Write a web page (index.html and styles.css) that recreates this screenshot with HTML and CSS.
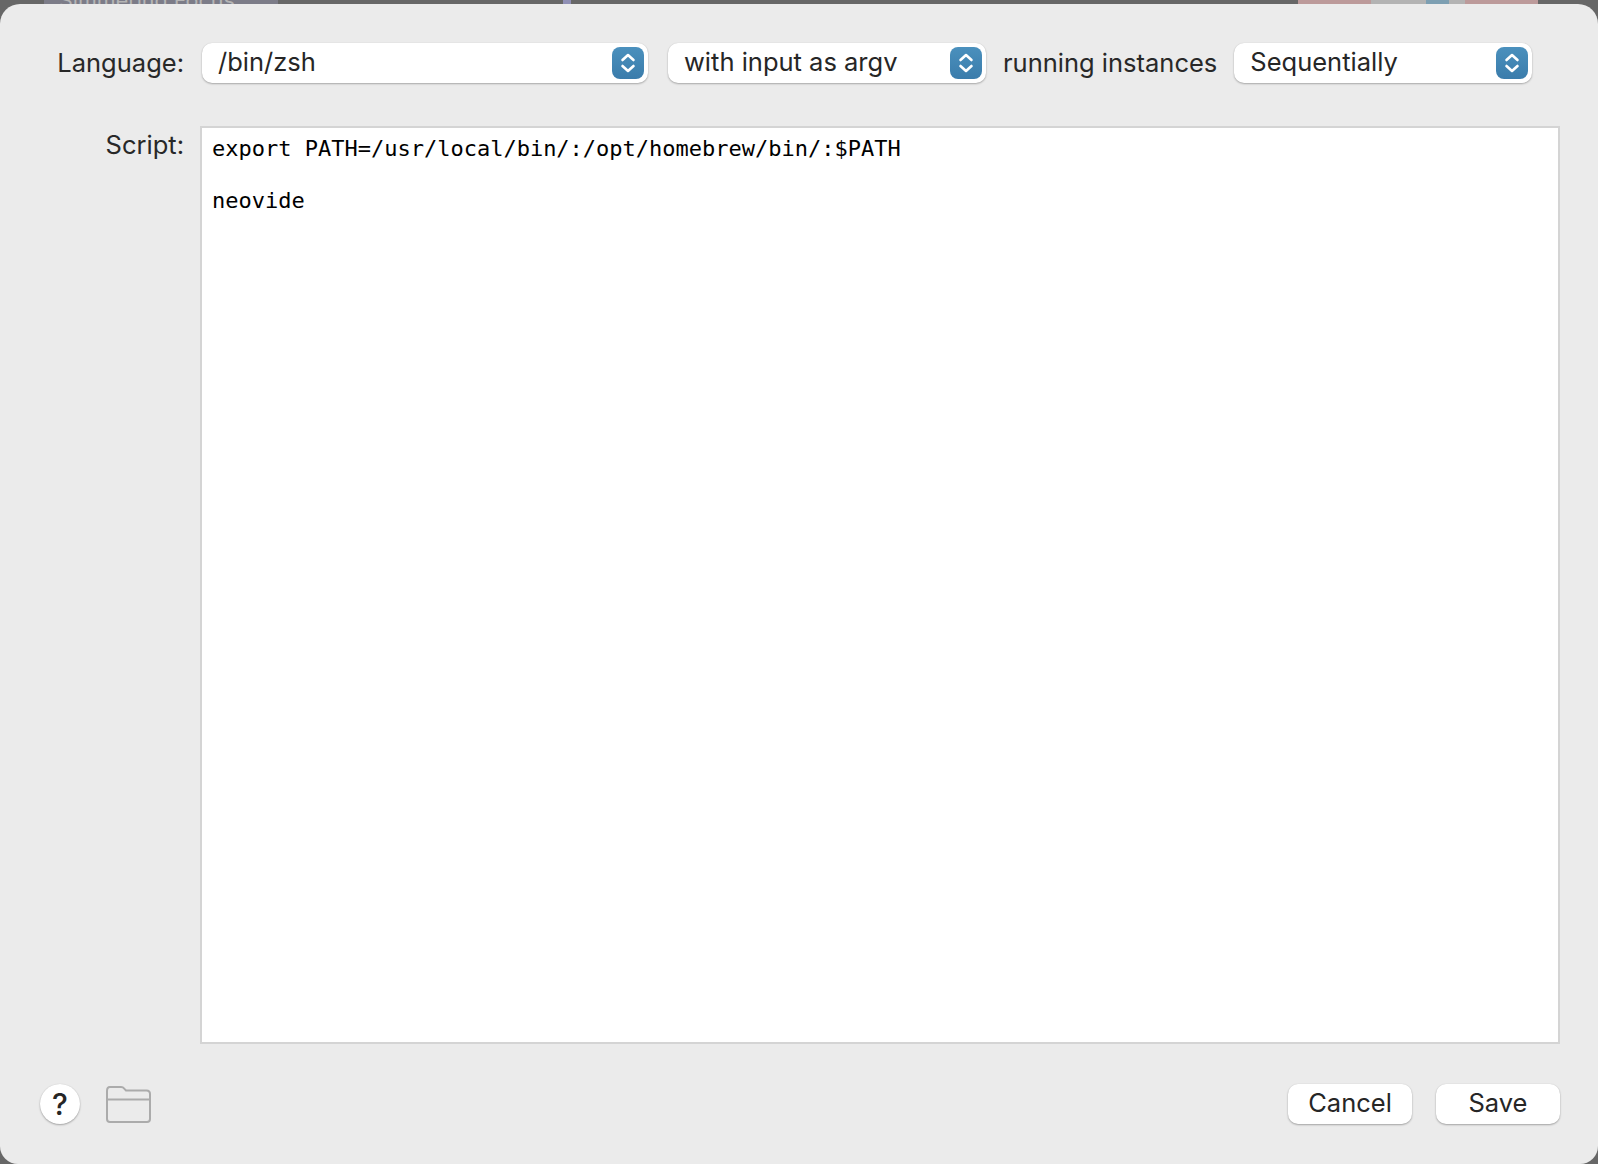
FILE: index.html
```html
<!DOCTYPE html>
<html lang="en">
<head>
<meta charset="utf-8">
<title>Script editor</title>
<link rel="stylesheet" href="styles.css">
</head>
<body>
<div class="backdrop">
  <span class="bd bd-a"><span class="bd-text">Simmering Focus</span></span>
  <span class="bd bd-b"></span>
  <span class="bd bd-c"></span>
  <span class="bd bd-c2"></span>
  <span class="bd bd-d"></span>
  <span class="bd bd-e"></span>
  <span class="bd bd-f"></span>
</div>
<main class="dialog">
  <div class="top-row">
    <span class="label label-lang">Language:</span>
    <div class="select select-lang"><span class="select-text">/bin/zsh</span>
      <span class="stepper"><svg viewBox="0 0 16 22" width="16" height="22"><path d="M2.500 8 8 3 13.500 8M2.500 14 8 19 13.500 14"/></svg></span></div>
    <div class="select select-input"><span class="select-text">with input as argv</span>
      <span class="stepper"><svg viewBox="0 0 16 22" width="16" height="22"><path d="M2.500 8 8 3 13.500 8M2.500 14 8 19 13.500 14"/></svg></span></div>
    <span class="inline-text">running instances</span>
    <div class="select select-run"><span class="select-text">Sequentially</span>
      <span class="stepper"><svg viewBox="0 0 16 22" width="16" height="22"><path d="M2.500 8 8 3 13.500 8M2.500 14 8 19 13.500 14"/></svg></span></div>
  </div>
  <div class="script-row">
    <span class="label label-script">Script:</span>
    <div class="editor">
      <div class="code">export PATH=/usr/local/bin/:/opt/homebrew/bin/:$PATH</div>
      <div class="code">&nbsp;</div>
      <div class="code">neovide</div>
    </div>
  </div>
  <div class="bottom-row">
    <div class="help">?</div>
    <svg class="folder" viewBox="0 0 45 37" width="45" height="37"><path d="M1 5Q1 1 4 1H15Q17 1 18.500 2.800L20 4.500H40.500Q44 4.500 44 8V33Q44 36 41 36H4Q1 36 1 33ZM1 13.500H44"/></svg>
    <div class="actions">
      <div class="btn">Cancel</div>
      <div class="btn">Save</div>
    </div>
  </div>
</main>
</body>
</html>
```
FILE: styles.css
```css
* { box-sizing: border-box; }
html, body { margin: 0; padding: 0; }
body {
  width: 1598px;
  height: 1164px;
  overflow: hidden;
  background: #676767;
  font-family: Inter, "Liberation Sans", sans-serif;
  color: #262626;
  position: relative;
}
.backdrop { position: absolute; left: 0; top: 0; width: 1598px; height: 20px; overflow: hidden; }
.bd { position: absolute; top: 0; height: 20px; }
.bd-a { left: 44px; width: 234px; background: #7c7c88; }
.bd-text { position: absolute; left: 15px; top: -10px; font-size: 21.5px; line-height: 20px; color: #b5b5b5; white-space: nowrap; }
.bd-b { left: 563px; width: 8px; background: #8f8fb5; }
.bd-c { left: 1298px; width: 73px; background: #bc9a9a; }
.bd-c2 { left: 1371px; width: 55px; background: #b3b3b3; }
.bd-d { left: 1426px; width: 23px; background: #7d9fb2; }
.bd-e { left: 1449px; width: 16px; background: #b3b3b3; }
.bd-f { left: 1465px; width: 73px; background: #bc9a9a; }

.dialog {
  position: relative;
  margin-top: 4px;
  height: 1160px;
  background: #ebebeb;
  border-radius: 20px 20px 18px 18px;
  padding: 39px 38px 0 0;
  display: flex;
  flex-direction: column;
}
.top-row { display: flex; align-items: center; height: 40px; }
.label {
  width: 184px;
  text-align: right;
  font-size: 25.5px;
  color: #282828;
  flex: none;
}
.label-lang { padding-bottom: 2px; }
.select {
  flex: none;
  height: 40px;
  margin-left: 18px;
  background: #fff;
  border-radius: 10px;
  box-shadow: 0 1px 2px rgba(0,0,0,.28), 0 0 1px rgba(0,0,0,.12);
  display: flex;
  align-items: center;
  justify-content: space-between;
  padding: 0 4px 0 16px;
  font-size: 25.5px;
  color: #262626;
}
.select-text { line-height: 38px; height: 40px; }
.select-lang { width: 446px; }
.select-input { width: 318px; margin-left: 20px; }
.select-run { width: 298px; margin-left: 17px; }
.inline-text { margin-left: 17px; padding-bottom: 2px; font-size: 25.5px; color: #282828; white-space: nowrap; }
.stepper {
  width: 32px;
  height: 32px;
  border-radius: 8px;
  background: linear-gradient(#4a90bd, #3a7cab);
  display: flex;
  align-items: center;
  justify-content: center;
}
.stepper svg { fill: none; stroke: #fff; stroke-width: 2.6; stroke-linecap: round; stroke-linejoin: round; }
.script-row { display: flex; margin-top: 43px; }
.label-script { line-height: 38px; }
.editor {
  margin-left: 16px;
  width: 1360px;
  height: 918px;
  background: #fff;
  border: 2px solid #d4d4d4;
  padding: 8px 10px;
}
.code { font-family: "DejaVu Sans Mono", "Liberation Mono", monospace; font-size: 22px; line-height: 26px; color: #000; white-space: pre; }
.bottom-row { display: flex; align-items: center; height: 40px; margin-top: 40px; padding-left: 40px; }
.help {
  width: 40px;
  height: 40px;
  border-radius: 50%;
  background: #fff;
  box-shadow: 0 1px 2px rgba(0,0,0,.3), 0 0 1px rgba(0,0,0,.12);
  font-size: 30px;
  font-weight: 500;
  line-height: 40px;
  text-align: center;
  color: #262626;
}
.folder { margin-left: 26px; fill: none; stroke: #ababab; stroke-width: 2; stroke-linejoin: round; }
.actions { margin-left: auto; display: flex; gap: 24px; }
.btn {
  width: 124px;
  height: 40px;
  background: #fff;
  border-radius: 10px;
  box-shadow: 0 1px 2px rgba(0,0,0,.3), 0 0 1px rgba(0,0,0,.12);
  font-size: 25.5px;
  line-height: 38px;
  text-align: center;
  color: #262626;
}
```
